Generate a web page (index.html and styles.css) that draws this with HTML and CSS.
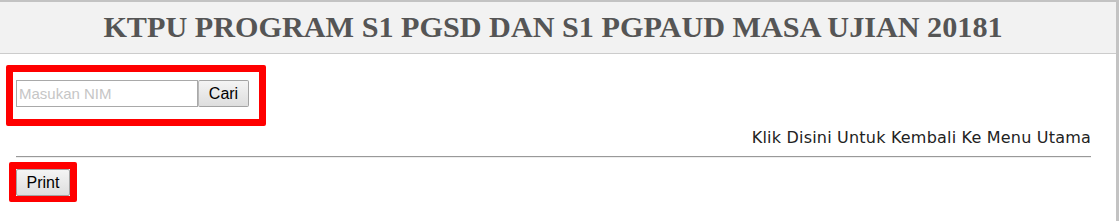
FILE: index.html
```
<!DOCTYPE html>
<html lang="id">
<head>
	<meta charset="UTF-8">
	<title>KTPU</title>
	<link rel="stylesheet" href="styles.css">
</head>
<body>
	<div class="page">
		<div class="header">
			<h1>KTPU PROGRAM S1 PGSD DAN S1 PGPAUD MASA UJIAN 20181</h1>
		</div>
		<div class="content">
			<div class="mark searchMark">
				<form class="search">
					<input type="text" placeholder="Masukan NIM"><button type="button">Cari</button>
				</form>
			</div>
			<div class="backLink"><a href="#">Klik Disini Untuk Kembali Ke Menu Utama</a></div>
			<hr>
			<div class="mark printMark">
				<button type="button">Print</button>
			</div>
		</div>
	</div>
</body>
</html>
```
FILE: styles.css
```
html, body {margin:0; padding:0; background:#fff;}
.page {height:219px; border-top:2px solid #c3c3c3; border-right:3px solid #c3c3c3; overflow:hidden;}
.header {height:51px; background-color:#f2f2f2; border-bottom:1px solid #ccc; display:flex; align-items:center; justify-content:center; padding-right:10px;}
.header h1 {margin:0; font-family:"Liberation Serif", serif; font-weight:bold; font-size:30.2px; color:#555;}
.content {padding:11px 25px 0 16px;}
.mark {border:7px solid #f00; border-radius:2px; display:inline-block; vertical-align:top;}
.searchMark {margin-left:-10px; padding:8px 10px 12px 3px;}
.search {display:flex;}
input, button {font-family:"Liberation Sans", Arial, sans-serif; font-size:16px; margin:0; box-sizing:border-box; height:27px;}
.search input {width:182px; border:1px solid #a9a9a9; padding:1px 2px; color:#000; font-size:15px;}
.search input::placeholder {color:#c6c6c6;}
button {border:1px solid #a3a3a3; background:linear-gradient(#f4f4f4, #dedede); color:#000; padding:0 8px; border-radius:2px;}
.search button {width:51px; border-left-color:#b8b8b8;}
.backLink {text-align:right; margin-top:2px; line-height:19px;}
.backLink a {font-family:"DejaVu Sans", Verdana, sans-serif; font-size:16px; letter-spacing:0.2px; color:#222; text-decoration:none;}
hr {margin:9px 0 0; border:0; border-top:1px solid #999; border-bottom:1px solid #eee; height:0;}
.printMark {margin:4px 0 0 -7px; padding:0; border-bottom-width:6px;}
.printMark button {width:54px; display:block;}
```
